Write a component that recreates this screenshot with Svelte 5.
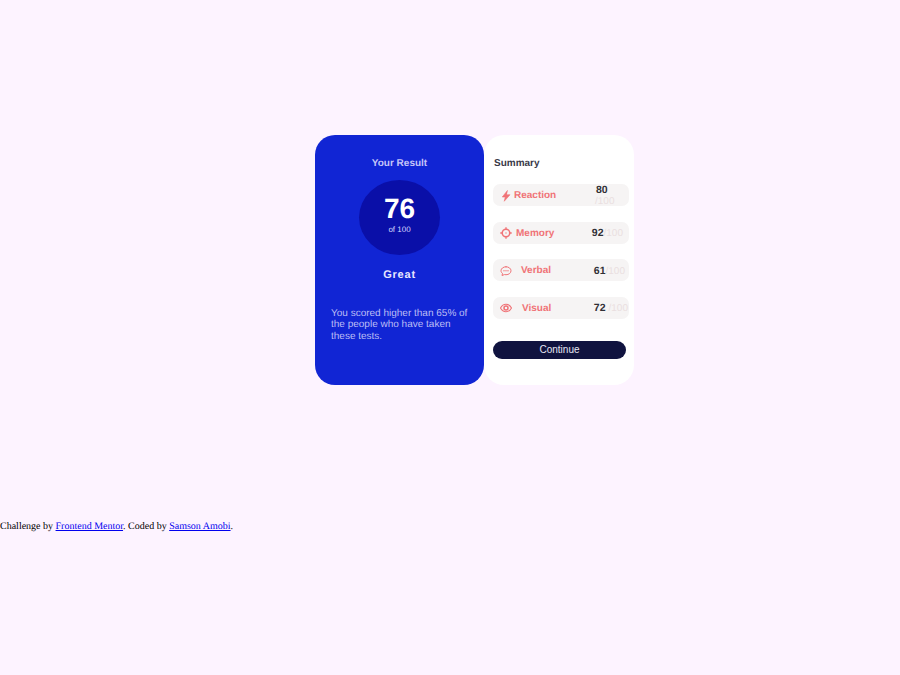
<script>
	const rows = [
		{ name: 'Reaction', score: 80, icon: 'bolt', gap: 2, right: 13, cls: 'stacked' },
		{ name: 'Memory', score: 92, icon: 'target', gap: 4, right: 6 },
		{ name: 'Verbal', score: 61, icon: 'chat', gap: 9, right: 4 },
		{ name: 'Visual', score: 72, icon: 'eye', gap: 10, right: 1, cls: 'spaced' }
	];
</script>

<main>
	<div class="card">
		<section class="result">
			<h2>Your Result</h2>
			<div class="circle">
				<strong>76</strong>
				<span>of 100</span>
			</div>
			<h3>Great</h3>
			<p>You scored higher than 65% of the people who have taken these tests.</p>
		</section>

		<section class="summary">
			<h2>Summary</h2>
			<ul>
				{#each rows as row}
					<li class={row.cls}>
						<span class="label" style="gap: {row.gap}px">
							<svg viewBox="0 0 24 24" width="12" height="12" fill="none" stroke="#f07377" stroke-width="2.400" stroke-linecap="round" stroke-linejoin="round">
								{#if row.icon === 'bolt'}
									<path d="M14.500 1.500 4.500 14h6l-2 8.500L20 9.500h-6.500z" fill="#f07377" stroke-width="1.200" />
								{:else if row.icon === 'target'}
									<circle cx="12" cy="12" r="7.500" stroke-width="3" />
									<path d="M12 1.500v3M12 19.500v3M1.500 12h3M19.500 12h3" stroke-width="2.600" />
									<circle cx="12" cy="12" r="1.300" fill="#f07377" stroke="none" />
								{:else if row.icon === 'chat'}
									<path d="M12 3.500c5.500 0 10 3.500 10 8s-4.500 8-10 8c-1 0-2-.1-3-.4L4 21l1-4.200C3 15.500 2 13.600 2 11.500c0-4.500 4.500-8 10-8z" stroke-width="2" />
									<path d="M8 11.500h.01M12 11.500h.01M16 11.500h.01" stroke-width="2.600" />
								{:else}
									<path d="M1 12s4-7.500 11-7.500S23 12 23 12s-4 7.500-11 7.500S1 12 1 12z" stroke-width="2.200" />
									<circle cx="12" cy="12" r="4" stroke-width="3" />
								{/if}
							</svg>
							{row.name}
						</span>
						<span class="score" style="margin-right: {row.right}px"><b>{row.score}</b><i>/100</i></span>
					</li>
				{/each}
			</ul>
			<button>Continue</button>
		</section>
	</div>
</main>

<footer>
	Challenge by <a href="#top">Frontend Mentor</a>. Coded by <a href="#top">Samson Amobi</a>.
</footer>

<style>
	:global(body) {
		background: #fdf3ff;
		text-rendering: geometricPrecision;
	}
	main {
		padding: 135px 0 0 315px;
	}
	.card {
		display: flex;
		width: 319px;
		height: 250px;
		font-family: 'Liberation Sans', Arial, sans-serif;
	}
	.result {
		box-sizing: border-box;
		width: 169px;
		background: #1125d4;
		border-radius: 20px;
		padding-top: 21.500px;
		text-align: center;
		color: #c4c4f8;
	}
	.result h2 {
		margin: 0 0 10.500px;
		font-size: 10px;
		line-height: 13px;
		font-weight: 700;
	}
	.circle {
		display: flex;
		flex-direction: column;
		align-items: center;
		width: 81px;
		height: 75px;
		margin: 0 auto;
		background: #0a0fa8;
		border-radius: 50%;
	}
	.circle strong {
		margin-top: 13px;
		font-size: 28px;
		line-height: 32px;
		color: #fff;
	}
	.circle span {
		font-size: 8px;
		line-height: 11px;
		margin-top: -1px;
		color: #d8d8ff;
	}
	.result h3 {
		margin: 13px 0 0;
		font-size: 11px;
		line-height: 14px;
		letter-spacing: 0.8px;
		color: #e8e7ff;
	}
	.result p {
		margin: 25.500px 16px 0;
		font-size: 10px;
		line-height: 11.500px;
		text-align: left;
		color: #bcbdf4;
	}
	.summary {
		box-sizing: border-box;
		width: 150px;
		background: #fff;
		border-radius: 20px;
		padding: 21px 5px 0 9px;
	}
	.summary h2 {
		margin: 0 0 13px 1px;
		font-size: 10px;
		line-height: 15px;
		color: #3a3a48;
	}
	ul {
		margin: 0;
		padding: 0;
		list-style: none;
		display: flex;
		flex-direction: column;
		gap: 15.500px;
	}
	li {
		box-sizing: border-box;
		display: flex;
		align-items: center;
		justify-content: space-between;
		height: 22px;
		padding-left: 7px;
		padding-top: 1px;
		background: #f6f4f4;
		border-radius: 7px;
		font-size: 10px;
	}
	.label {
		display: flex;
		align-items: center;
		font-weight: 700;
		color: #f07377;
	}
	.score {
		font-size: 10px;
	}
	.score b {
		font-size: 10.500px;
		color: #303036;
	}
	.score i {
		font-style: normal;
		color: #eadfe0;
	}
	.stacked .score {
		width: 21px;
		line-height: 11px;
	}
	.stacked .score b {
		display: block;
		padding-left: 1px;
	}
	.stacked .score i {
		display: block;
	}
	.spaced .score i {
		margin-left: 3px;
	}
	button {
		display: block;
		width: 133px;
		height: 18.500px;
		margin-top: 22px;
		padding: 0;
		border: 0;
		border-radius: 10px;
		background: #10133f;
		color: #e6e6f2;
		font: 10px 'Liberation Sans', Arial, sans-serif;
	}
	footer {
		margin-top: 134px;
		padding-top: 0.500px;
		font-family: 'Liberation Serif', 'Times New Roman', serif;
		font-size: 10px;
		line-height: 14px;
		color: #000;
	}
</style>
